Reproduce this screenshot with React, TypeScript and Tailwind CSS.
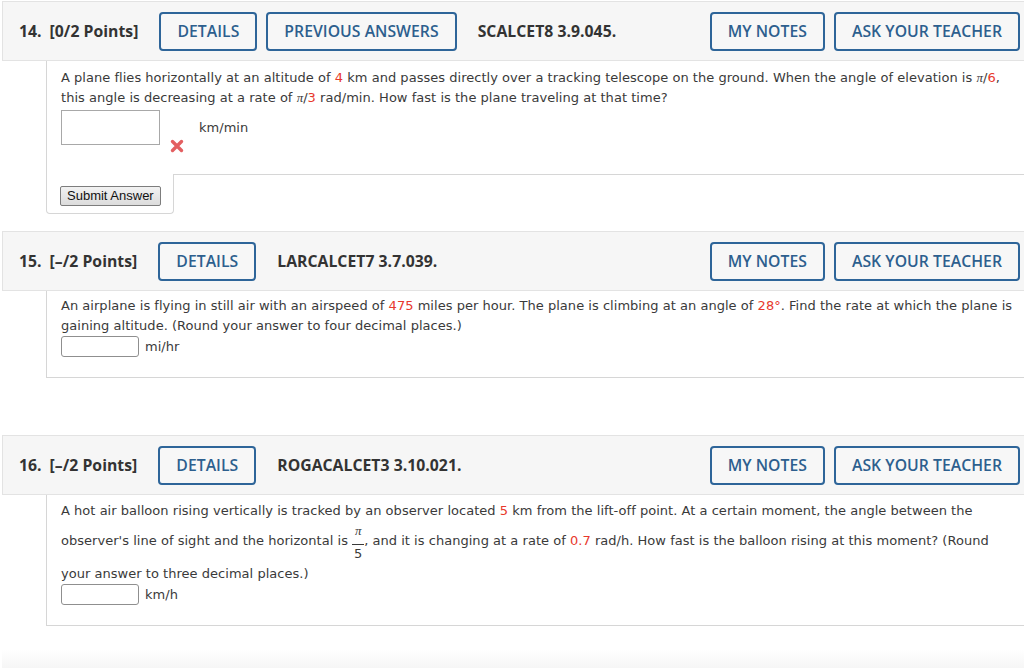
import React from 'react'

const head = { fontFamily: '"Open Sans", "Noto Sans", sans-serif' }
const body = { fontFamily: '"DejaVu Sans", Verdana, sans-serif' }

function Btn({ label }: { label: string }) {
  return (
    <button
      className="h-[39px] px-[16px] rounded-[4px] border-2 border-[#2e6599] bg-[#f7f7f7] text-[15.75px] font-semibold text-[#2d5f8e]"
      style={head}
    >
      {label}
    </button>
  )
}

function Header({ num, points, code, prev }: { num: string; points: string; code: string; prev?: boolean }) {
  return (
    <div
      className="flex items-center h-[60px] border-y border-l border-[#e3e3e3] bg-[#f6f6f6] pl-[16px] pr-[4px]"
      style={head}
    >
      <div className="text-[15.75px] font-bold text-[#333] whitespace-nowrap">
        <span>{num}</span>
        <span className="ml-[8px]">{points}</span>
      </div>
      <div className="flex gap-[9px] ml-[21px]">
        <Btn label="DETAILS" />
        {prev && <Btn label="PREVIOUS ANSWERS" />}
      </div>
      <div className="ml-[21px] text-[15.75px] font-bold text-[#333] whitespace-nowrap">{code}</div>
      <div className="flex gap-[9px] ml-auto">
        <Btn label="MY NOTES" />
        <Btn label="ASK YOUR TEACHER" />
      </div>
    </div>
  )
}

function Red({ children }: { children: React.ReactNode }) {
  return <span className="text-[#e8382c]">{children}</span>
}

function Pi() {
  return <span className="italic" style={{ fontFamily: '"Liberation Serif", "DejaVu Serif", serif' }}>π</span>
}

function WrongMark() {
  return (
    <svg width="14" height="14" viewBox="0 0 14 14" className="mt-[29px] ml-[10px]">
      <path d="M2.5 2.5 L11.5 11.5 M11.5 2.5 L2.5 11.5" stroke="#e35f61" strokeWidth="3.4" strokeLinecap="round" />
    </svg>
  )
}

export default function App() {
  return (
    <div className="w-[1024px] h-[668px] overflow-hidden bg-white">
      <div className="w-[1024px] pl-[2px] pt-[1px] text-[13px] leading-[20px] tracking-[0.03px] text-[#3a3a3a]">
        {/* question 14 */}
        <Header num="14." points="[0/2 Points]" code="SCALCET8 3.9.045." prev />
        <div className="ml-[44px] border-l border-b border-[#d6d6d6] pl-[14px] pt-[7px] pb-[21px]" style={body}>
          <div className="whitespace-nowrap">
            A plane flies horizontally at an altitude of <Red>4</Red> km and passes directly over a tracking telescope on the ground. When the angle of elevation is <Pi />/<Red>6</Red>,
          </div>
          <div className="whitespace-nowrap">
            this angle is decreasing at a rate of <Pi />/<Red>3</Red> rad/min. How fast is the plane traveling at that time?
          </div>
          <div className="flex items-start mt-[2px]">
            <div className="w-[99px] h-[35px] border border-[#a8a8a8] bg-white" />
            <WrongMark />
            <span className="ml-[15px] mt-[8px]">km/min</span>
          </div>
        </div>
        <div className="ml-[44px] -mt-px w-[128px] h-[40px] bg-white border-x border-b border-[#d6d6d6] rounded-b-[4px] pl-[13px] pt-[11px]">
          <button
            className="h-[20px] px-[6px] border border-[#7d7d7d] rounded-[2px] bg-gradient-to-b from-[#f2f2f2] to-[#dcdcdc] text-[13px] leading-[18px] tracking-normal text-[#111]"
            style={{ fontFamily: '"Liberation Sans", Arial, sans-serif' }}
          >
            Submit Answer
          </button>
        </div>

        {/* question 15 */}
        <div className="mt-[17px]">
          <Header num="15." points="[–/2 Points]" code="LARCALCET7 3.7.039." />
        </div>
        <div className="ml-[44px] border-l border-b border-[#d6d6d6] pl-[14px] pt-[5px] pb-[20px]" style={body}>
          <div className="whitespace-nowrap">
            An airplane is flying in still air with an airspeed of <Red>475</Red> miles per hour. The plane is climbing at an angle of <Red>28°</Red>. Find the rate at which the plane is
          </div>
          <div className="whitespace-nowrap">gaining altitude. (Round your answer to four decimal places.)</div>
          <div className="flex items-center">
            <div className="w-[78px] h-[21px] border border-[#8f8f8f] rounded-[3px] bg-white" />
            <span className="ml-[6px]">mi/hr</span>
          </div>
        </div>

        {/* question 16 */}
        <div className="mt-[57px]">
          <Header num="16." points="[–/2 Points]" code="ROGACALCET3 3.10.021." />
        </div>
        <div className="ml-[44px] border-l border-b border-[#d6d6d6] pl-[14px] pt-[6px] pb-[20px]" style={body}>
          <div className="whitespace-nowrap">
            A hot air balloon rising vertically is tracked by an observer located <Red>5</Red> km from the lift-off point. At a certain moment, the angle between the
          </div>
          <div className="flex items-start h-[43px] whitespace-nowrap">
            <span className="mt-[10px]">observer's line of sight and the horizontal is&nbsp;</span>
            <span className="flex flex-col items-center mt-[4px]">
              <span className="text-[13px] leading-[12px] pb-[7px]">
                <Pi />
              </span>
              <span className="w-[12px] border-t border-[#3a3a3a]" />
              <span className="leading-[18px]">5</span>
            </span>
            <span className="mt-[10px]">, and it is changing at a rate of <Red>0.7</Red> rad/h. How fast is the balloon rising at this moment? (Round</span>
          </div>
          <div className="whitespace-nowrap">your answer to three decimal places.)</div>
          <div className="flex items-center">
            <div className="w-[78px] h-[21px] border border-[#8f8f8f] rounded-[3px] bg-white" />
            <span className="ml-[6px]">km/h</span>
          </div>
        </div>
        <div className="mt-[24px] h-[20px] bg-gradient-to-b from-white to-[#f5f5f5]" />
      </div>
    </div>
  )
}
